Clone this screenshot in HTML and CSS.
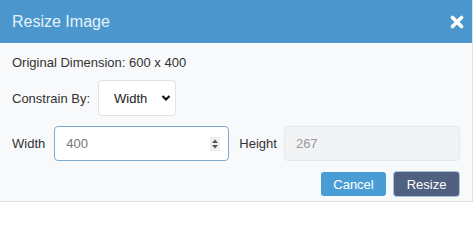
FILE: index.html
```html
<!DOCTYPE html>
<html>
<head>
<meta charset="utf-8">
<link rel="stylesheet" href="styles.css">
</head>
<body>
<div class="dialog">
  <div class="header">
    <span class="title">Resize Image</span>
    <svg class="close" width="14" height="14" viewBox="0 0 14 14"><path d="M2.5 2.5 L11.5 11.5 M11.5 2.5 L2.5 11.5" stroke="#fff" stroke-width="3.6" stroke-linecap="round"/></svg>
  </div>
  <div class="body">
    <div class="line">Original Dimension: 600 x 400</div>
    <div class="row constrain">
      <span class="label">Constrain By:</span>
      <div class="select">
        <span>Width</span>
        <svg width="10" height="8" viewBox="0 0 10 8"><path d="M1.5 2 L5 5.5 L8.5 2" stroke="#111" stroke-width="2.2" fill="none"/></svg>
      </div>
    </div>
    <div class="row dims">
      <span class="label">Width</span>
      <div class="input focus">
        <span class="val">400</span>
        <span class="spin"><svg width="8" height="12" viewBox="0 0 8 12"><path d="M4 1.5 L7 5 L1 5 Z M1 7 L7 7 L4 10.5 Z" fill="#555"/></svg></span>
      </div>
      <span class="label hlabel">Height</span>
      <div class="input disabled"><span class="val">267</span></div>
    </div>
    <div class="actions">
      <button class="btn cancel">Cancel</button>
      <button class="btn resize">Resize</button>
    </div>
  </div>
</div>
</body>
</html>
```
FILE: styles.css
```css
html, body { margin: 0; padding: 0; background: #ffffff; }
body { font-family: "Liberation Sans", Arial, sans-serif; font-size: 13px; color: #333; }
.dialog { width: 472px; height: 201px; background: #f8f9fa; border-right: 1px solid #e0e0e0; border-bottom: 1px solid #e0e0e0; display: flex; flex-direction: column; }
.header { height: 43px; background: #4b97cd; display: flex; align-items: center; justify-content: space-between; padding: 0 8px 0 12px; box-sizing: border-box; }
.title { color: #e6f2fb; font-size: 16px; }
.body { padding: 10px 12px 0 12px; display: flex; flex-direction: column; }
.line { height: 20px; line-height: 20px; }
.row { display: flex; align-items: center; }
.constrain { margin-top: 7px; }
.select { margin-left: 8px; width: 78px; height: 36px; box-sizing: border-box; background: #fff; border: 1px solid #e3e3e3; border-radius: 4px; display: flex; align-items: center; justify-content: space-between; padding: 0 4px 0 15px; }
.select span { color: #222; }
.dims { margin-top: 10px; }
.input { height: 35px; box-sizing: border-box; border-radius: 4px; display: flex; align-items: center; justify-content: space-between; padding: 0 10px 0 11px; }
.input .val { color: #777; }
.focus { margin-left: 9px; width: 176px; background: #fff; border: 1px solid #80a9d2; }
.spin { width: 10px; height: 14px; background: #eceeef; display: flex; align-items: center; justify-content: center; margin-right: -2px; }
.hlabel { margin-left: 10px; }
.disabled { margin-left: 7px; width: 177px; background: #f1f3f5; border: 1px solid #e6e8ea; }
.disabled .val { color: #999; }
.actions { margin-top: 11px; display: flex; justify-content: flex-end; gap: 8px; padding-right: 1px; }
.btn { font-family: "Liberation Sans", Arial, sans-serif; font-size: 13px; color: #fff; height: 24px; width: 65px; border-radius: 3px; border: none; padding: 0; }
.cancel { background: #4a9dd4; }
.resize { background: #4f6080; box-shadow: 0 0 0 1px #a9c1dc; }
```
